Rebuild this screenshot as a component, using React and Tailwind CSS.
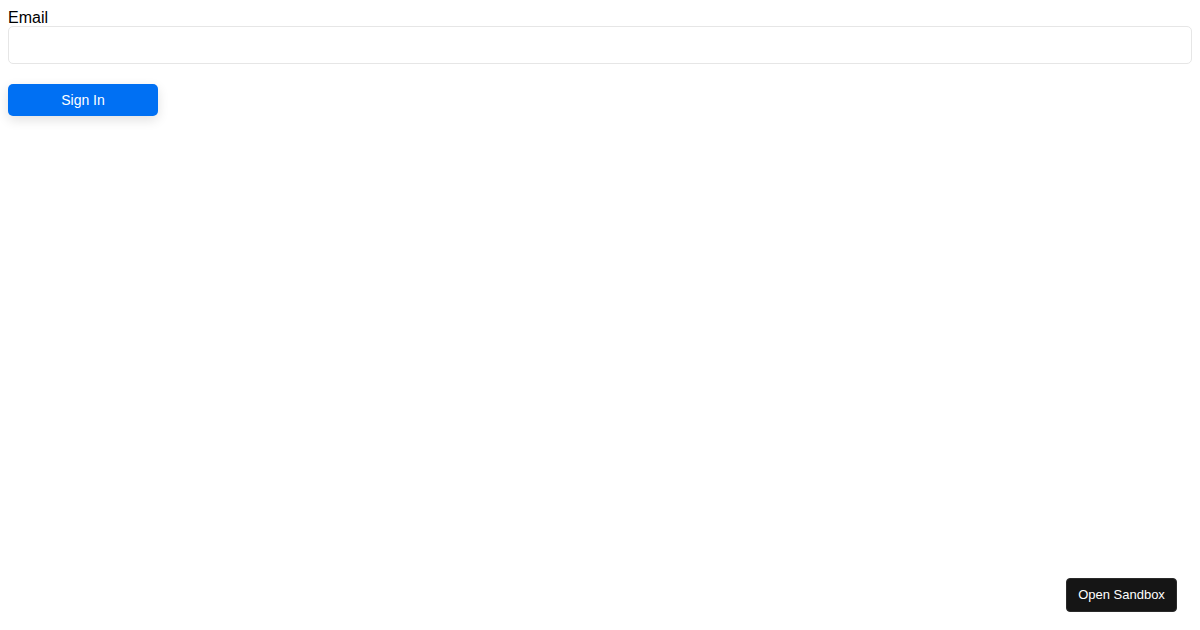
import React from "react";

export default function App() {
    return (
        <div className="min-h-[630px] bg-white p-2 font-['Liberation_Sans',Arial,sans-serif] text-black">
            <label className="block pt-px text-base leading-[17px]">Email</label>
            <input
                type="email"
                className="block h-[38px] w-full rounded-[5px] border border-[#e6e6e6] px-2 text-sm outline-none"
            />
            <button className="mt-5 h-8 w-[150px] rounded-[5px] bg-[#0070f3] text-sm text-white shadow-[0_4px_12px_0_rgba(0,0,0,0.12)]">
                Sign In
            </button>
            <button className="fixed bottom-[18px] right-[23px] h-[34px] w-[111px] rounded-[4px] border border-[#2a2a2a] bg-[#151515] text-[13px] text-white">
                Open Sandbox
            </button>
        </div>
    );
}
